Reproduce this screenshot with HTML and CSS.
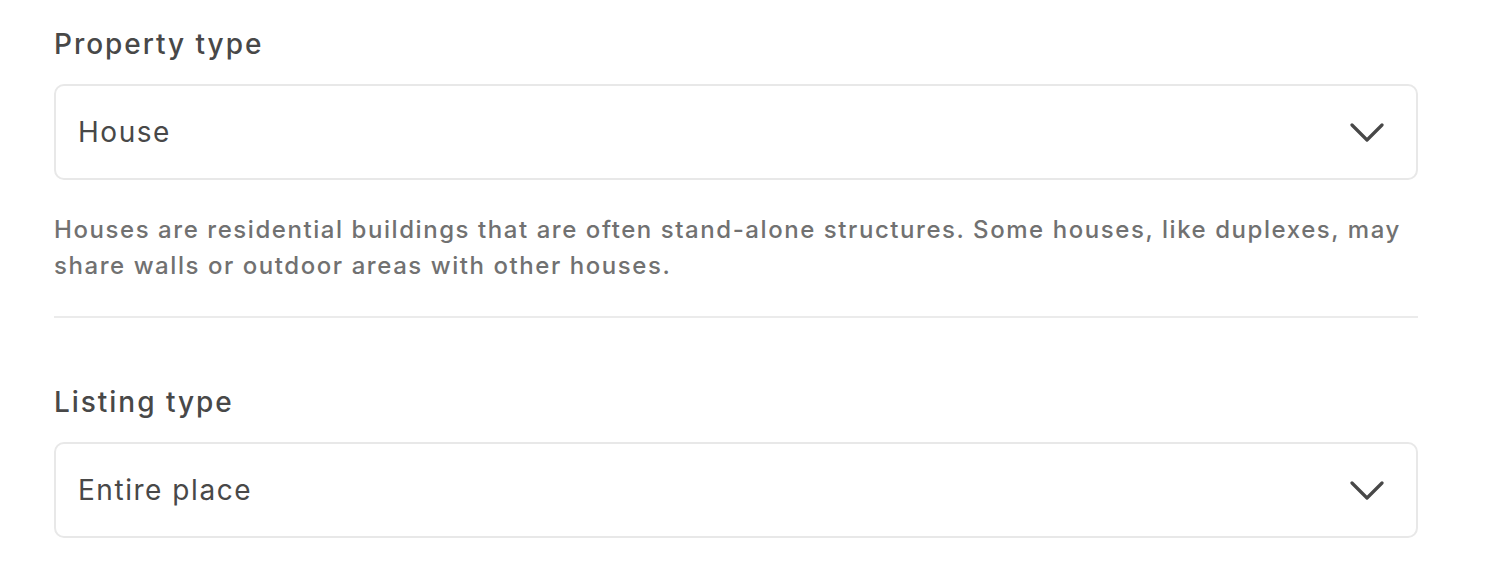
FILE: index.html
```html
<!DOCTYPE html>
<html lang="en">
<head>
    <meta charset="UTF-8">
    <meta name="viewport" content="width=device-width, initial-scale=1.0">
    <title>Property and guests</title>
    <link rel="stylesheet" href="styles.css">
</head>
<body>
    <div class="form">
        <div class="field">
            <label class="field-label">Property type</label>
            <div class="select">
                <span class="select-value">House</span>
                <svg class="chevron" width="34" height="19" viewBox="0 0 34 19"><polyline points="2,2 17,17 32,2"/></svg>
            </div>
            <p class="hint">Houses are residential buildings that are often stand-alone structures. Some houses, like duplexes, may share walls or outdoor areas with other houses.</p>
        </div>

        <div class="divider"></div>

        <div class="field">
            <label class="field-label">Listing type</label>
            <div class="select">
                <span class="select-value">Entire place</span>
                <svg class="chevron" width="34" height="19" viewBox="0 0 34 19"><polyline points="2,2 17,17 32,2"/></svg>
            </div>
        </div>
    </div>
</body>
</html>
```

FILE: styles.css
```css
body {
    margin: 0;
    font-family: Inter, "Noto Sans", sans-serif;
    background-color: #fff;
    color: #484848;
}
.form {
    padding: 26px 72px 0 54px;
}
.field-label {
    display: block;
    font-size: 28px;
    font-weight: 500;
    letter-spacing: 0.07em;
    line-height: 36px;
    margin-bottom: 22px;
}
.select {
    height: 92px;
    border: 2px solid #e8e8e8;
    border-radius: 10px;
    display: flex;
    align-items: center;
    justify-content: space-between;
    padding: 0 32px 0 22px;
}
.select-value {
    font-size: 28px;
    letter-spacing: 0.055em;
}
.chevron polyline {
    fill: none;
    stroke: #484848;
    stroke-width: 3.2;
    stroke-linecap: round;
    stroke-linejoin: round;
}
.hint {
    margin: 32px 0 0;
    font-size: 24px;
    font-weight: 500;
    line-height: 36px;
    letter-spacing: 0.065em;
    color: #717171;
}
.divider {
    height: 2px;
    background-color: #ebebeb;
    margin: 32px 0 66px;
}
```
